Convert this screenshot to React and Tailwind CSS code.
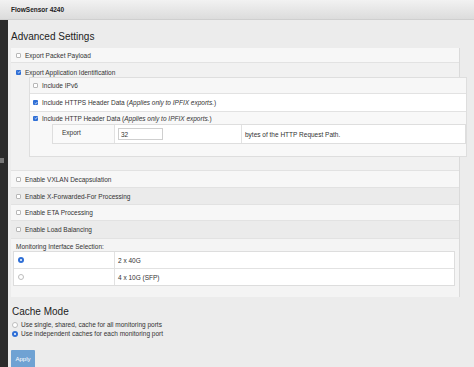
import React from 'react';

const Box = ({ checked }) =>
  checked ? (
    <span className="flex items-center justify-center w-[5px] h-[5px] rounded-[1px] bg-[#2f6fd6] shrink-0">
      <svg viewBox="0 0 6 6" className="w-[4px] h-[4px]">
        <path d="M1 3.2 L2.5 4.6 L5 1.5" stroke="#fff" strokeWidth="1" fill="none" />
      </svg>
    </span>
  ) : (
    <span className="w-[5px] h-[5px] rounded-[1px] border border-[#b8b8b8] bg-white shrink-0" />
  );

const Radio = ({ on }) =>
  on ? (
    <span className="flex items-center justify-center w-[6px] h-[6px] rounded-full bg-[#2f6fd6] shrink-0">
      <span className="w-[2px] h-[2px] rounded-full bg-white" />
    </span>
  ) : (
    <span className="w-[6px] h-[6px] rounded-full border border-[#bdbdbd] bg-white shrink-0" />
  );

// one checkbox row inside the Advanced Settings panel
const Row = ({ label, checked, shade, h }) => (
  <div className={`flex items-center gap-[4px] pl-[5px] border-b border-[#e2e2e2] ${h} ${shade ? 'bg-[#ebebeb]' : 'bg-[#f7f7f7]'}`}>
    <Box checked={checked} />
    <span>{label}</span>
  </div>
);

export default function App() {
  return (
    <div className="w-[474px] h-[367px] overflow-hidden flex flex-col bg-[#ececec] font-['Liberation_Sans',Arial,sans-serif] text-[#333] text-[6.5px] leading-[9px]">
      {/* top bar */}
      <div className="h-[20px] shrink-0 flex items-center pl-[11px] bg-gradient-to-b from-[#f2f2f2] to-[#dcdcdc] border-b border-[#cfcfcf]">
        <span className="font-bold text-[6.5px] text-[#222]">FlowSensor 4240</span>
      </div>

      <div className="flex flex-1 min-h-0">
        {/* dark sidebar edge */}
        <div className="w-[8px] bg-[#2b2b2b] flex flex-col">
          <div className="mt-[138px] h-[5px] w-[4px] bg-[#777]" />
        </div>

        <div className="flex-1 pl-[3px]">
          <div className="pt-[11px] pb-[5px] text-[10px] leading-[12px] text-[#222]">Advanced Settings</div>

          {/* advanced settings panel */}
          <div className="w-[449px] border-r border-[#dadada] bg-[#efefef]">
            <Row label="Export Packet Payload" h="h-[15px]" />

            <div className="bg-[#f1f1f1] border-b border-[#e2e2e2] pb-[13px]">
              <div className="flex items-center gap-[4px] pl-[5px] pt-[4px] h-[14px]">
                <Box checked />
                <span>Export Application Identification</span>
              </div>

              {/* nested options */}
              <div className="ml-[18px] -mr-[8px] border border-[#dedede] bg-[#f5f5f5]">
                <div className="flex items-center gap-[4px] pl-[3px] h-[16px] bg-[#f7f7f7] border-b border-[#e2e2e2]">
                  <Box />
                  <span>Include IPv6</span>
                </div>
                <div className="flex items-center gap-[4px] pl-[3px] h-[18px] bg-white border-b border-[#e2e2e2]">
                  <Box checked />
                  <span>Include HTTPS Header Data (<i>Applies only to IPFIX exports.</i>)</span>
                </div>
                <div className="bg-[#f8f8f8] pb-[12px]">
                  <div className="flex items-center gap-[4px] pl-[3px] h-[12px]">
                    <Box checked />
                    <span>Include HTTP Header Data (<i>Applies only to IPFIX exports.</i>)</span>
                  </div>
                  <div className="ml-[22px] flex h-[20px] border border-[#dedede] bg-white">
                    <div className="w-[62px] pl-[9px] pt-[3px] bg-[#fafafa] border-r border-[#e2e2e2]">Export</div>
                    <div className="w-[127px] flex items-center pl-[3px] border-r border-[#e2e2e2]">
                      <div className="w-[45px] h-[12px] border border-[#cfcfcf] bg-white flex items-center pl-[2px]">32</div>
                    </div>
                    <div className="flex items-center pl-[3px]">bytes of the HTTP Request Path.</div>
                  </div>
                </div>
              </div>
            </div>

            <Row label="Enable VXLAN Decapsulation" h="h-[17px]" />
            <Row label="Enable X-Forwarded-For Processing" h="h-[17px]" shade />
            <Row label="Enable ETA Processing" h="h-[16px]" />
            <Row label="Enable Load Balancing" h="h-[18px]" shade />

            <div className="bg-[#f4f4f4] pb-[11px]">
              <div className="pl-[5px] h-[12px] flex items-center pt-[3px]">Monitoring Interface Selection:</div>
              <div className="ml-[2px] mr-[4px] border border-[#dddddd] bg-white">
                <div className="flex h-[17px] border-b border-[#e2e2e2]">
                  <div className="w-[101px] flex items-center pl-[4px] border-r border-[#e2e2e2]">
                    <Radio on />
                  </div>
                  <div className="flex items-center pl-[3px]">2 x 40G</div>
                </div>
                <div className="flex h-[16px]">
                  <div className="w-[101px] flex items-center pl-[4px] border-r border-[#e2e2e2]">
                    <Radio />
                  </div>
                  <div className="flex items-center pl-[3px]">4 x 10G (SFP)</div>
                </div>
              </div>
            </div>
          </div>

          {/* cache mode */}
          <div className="pt-[9px] text-[10px] leading-[12px] text-[#222] pl-[1px]">Cache Mode</div>
          <div className="mt-[2px] flex flex-col pl-[1px]">
            <div className="flex items-center gap-[3px] h-[9px]">
              <Radio />
              <span>Use single, shared, cache for all monitoring ports</span>
            </div>
            <div className="flex items-center gap-[3px] h-[9px]">
              <Radio on />
              <span>Use independent caches for each monitoring port</span>
            </div>
          </div>

          <button className="mt-[12px] w-[24px] h-[18px] bg-[#6fa2d3] text-white text-[6px] rounded-[1px] flex items-center justify-center">
            Apply
          </button>
        </div>
      </div>
    </div>
  );
}
